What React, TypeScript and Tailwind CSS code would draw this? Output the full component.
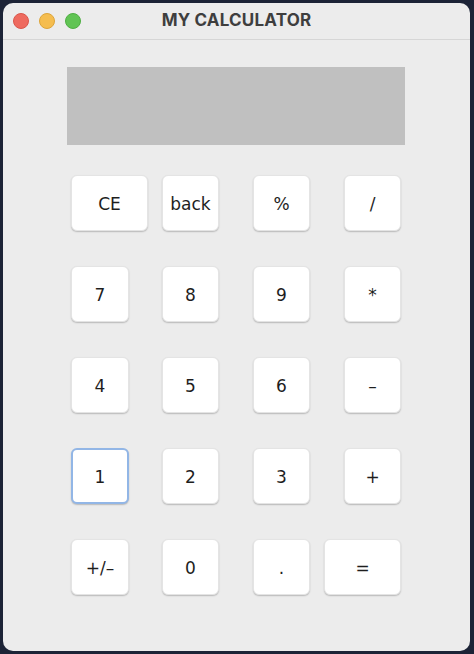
import React from "react";

const rows: { label: string; w: string; ml: string; focus?: boolean }[][] = [
    [
        { label: "CE", w: "w-[77px]", ml: "ml-0" },
        { label: "back", w: "w-[57px]", ml: "ml-[14px]" },
        { label: "%", w: "w-[57px]", ml: "ml-[34px]" },
        { label: "/", w: "w-[57px]", ml: "ml-[34px]" },
    ],
    [
        { label: "7", w: "w-[58px]", ml: "ml-0" },
        { label: "8", w: "w-[57px]", ml: "ml-[33px]" },
        { label: "9", w: "w-[57px]", ml: "ml-[34px]" },
        { label: "*", w: "w-[57px]", ml: "ml-[34px]" },
    ],
    [
        { label: "4", w: "w-[58px]", ml: "ml-0" },
        { label: "5", w: "w-[57px]", ml: "ml-[33px]" },
        { label: "6", w: "w-[57px]", ml: "ml-[34px]" },
        { label: "\u2013", w: "w-[57px]", ml: "ml-[34px]" },
    ],
    [
        { label: "1", w: "w-[58px]", ml: "ml-0", focus: true },
        { label: "2", w: "w-[57px]", ml: "ml-[33px]" },
        { label: "3", w: "w-[57px]", ml: "ml-[34px]" },
        { label: "+", w: "w-[57px]", ml: "ml-[34px]" },
    ],
    [
        { label: "+/\u2013", w: "w-[58px]", ml: "ml-0" },
        { label: "0", w: "w-[57px]", ml: "ml-[33px]" },
        { label: ".", w: "w-[57px]", ml: "ml-[34px]" },
        { label: "=", w: "w-[77px]", ml: "ml-[14px]" },
    ],
];

export default function App() {
    return (
        <div className="w-[474px] h-[654px] bg-[#1c2336] pt-[3px] pl-[3px] overflow-hidden">
            <div className="w-[467px] h-[648px] bg-[#ececec] rounded-[10px] overflow-hidden flex flex-col">
                {/* title bar */}
                <div className="relative h-[37px] border-b border-[#d6d6d6] flex items-center justify-center">
                    <div className="absolute left-[10px] top-[10px] flex gap-[10px]">
                        <span className="w-[16px] h-[16px] rounded-full bg-[#ee6a5f] border border-[#d9564b]" />
                        <span className="w-[16px] h-[16px] rounded-full bg-[#f5bd4f] border border-[#dca43a]" />
                        <span className="w-[16px] h-[16px] rounded-full bg-[#61c454] border border-[#4fae43]" />
                    </div>
                    <h1 className="text-[17px] font-bold text-[#3e3e3e] tracking-[0.2px]" style={{ fontFamily: "Inter, 'Liberation Sans', sans-serif" }}>
                        MY CALCULATOR
                    </h1>
                </div>

                {/* display */}
                <div className="ml-[64px] mt-[27px] w-[338px] h-[78px] bg-[#c0c0c0]" />

                {/* keypad */}
                <div className="ml-[68px] mt-[30px] flex flex-col gap-[35px]">
                    {rows.map((row, i) => (
                        <div key={i} className="flex">
                            {row.map((b) => (
                                <button
                                    key={b.label}
                                    className={
                                        b.w + " " + b.ml +
                                        " h-[56px] pt-[3px] rounded-[6px] bg-white text-[17px] text-[#1e1e1e] flex items-center justify-center shadow-[0_1px_1.5px_rgba(0,0,0,0.22)] " +
                                        (b.focus ? "border-2 border-[#92b6e6]" : "border border-[#e4e4e4]")
                                    }
                                    style={{ fontFamily: "'DejaVu Sans', 'Noto Sans', sans-serif" }}
                                >
                                    {b.label}
                                </button>
                            ))}
                        </div>
                    ))}
                </div>
            </div>
        </div>
    );
}
